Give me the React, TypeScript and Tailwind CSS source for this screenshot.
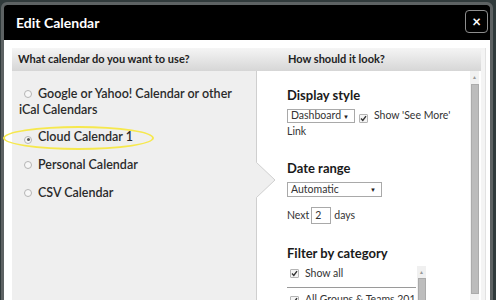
import React from 'react';

const font = { fontFamily: 'Lato, "Open Sans", sans-serif' };

function Radio({ checked }: { checked?: boolean }) {
  return (
    <span className="inline-flex items-center justify-center w-[8px] h-[8px] rounded-full border border-[#b4b4b4] bg-[#f7f7f7] align-[-0px] ml-[5px] mr-[6px]">
      {checked && <span className="w-[3px] h-[3px] rounded-full bg-[#555]" />}
    </span>
  );
}

function Check() {
  return (
    <span className="inline-flex items-center justify-center w-[9px] h-[9px] border border-[#b4b4b4] bg-[#f4f4f4] rounded-[1px] shrink-0">
      <svg width="7" height="7" viewBox="0 0 7 7">
        <path d="M1 3.6 L2.8 5.4 L6 1.2" fill="none" stroke="#333" strokeWidth="1.4" />
      </svg>
    </span>
  );
}

function Select({ label, width }: { label: string; width: string }) {
  return (
    <div className={`${width} h-full border border-[#a9a9a9] bg-white flex items-center justify-between pl-[3px] pr-[5px] text-[10.5px] text-[#333]`}>
      <span>{label}</span>
      <span className="text-[6px] text-[#222]">▼</span>
    </div>
  );
}

export default function App() {
  return (
    <div className="relative w-[496px] h-[300px] overflow-hidden bg-[#303a3b] pt-[2px] pl-[1px]" style={font}>
      <div className="w-[492px] h-[320px] border-[3px] border-[#5d6263] rounded-t-[6px] bg-white overflow-hidden flex flex-col">
        {/* Title bar */}
        <div className="h-[35px] bg-black flex items-center justify-between pl-[12px] pr-[2px] shrink-0">
          <span className="text-white text-[14px] font-bold">Edit Calendar</span>
          <div className="w-[23px] h-[23px] mt-[-2px] border-[1.5px] border-[#8e8e8e] rounded-[4px] flex items-center justify-center text-white text-[15px] font-bold leading-none">
            ×
          </div>
        </div>

        {/* Body */}
        <div className="flex pl-[8px] pt-[8px]">
          <div className="w-[469px] flex flex-col">
            {/* Column headers */}
            <div className="h-[23px] flex items-center bg-gradient-to-b from-[#f5f5f5] to-[#d6d6d6] text-[11px] font-bold text-[#222]">
              <div className="w-[245px] pl-[6px]">What calendar do you want to use?</div>
              <div className="pl-[31px]">How should it look?</div>
            </div>

            <div className="relative flex h-[240px]">
              {/* Source list */}
              <div className="w-[244px] bg-[#efefef] pl-[7px] pr-[10px] pt-[15px] flex flex-col gap-[12px] text-[12.5px] font-semibold leading-[16px] text-[#2a2a2a]">
                <div>
                  <Radio />Google or Yahoo! Calendar or other iCal Calendars
                </div>
                <div className="-mt-[1px]">
                  <Radio checked />Cloud Calendar 1
                </div>
                <div>
                  <Radio />Personal Calendar
                </div>
                <div>
                  <Radio />CSV Calendar
                </div>
              </div>
              <div className="w-px bg-[#cfcfcf]" />

              {/* Arrow notch */}
              <svg className="absolute left-[244px] top-[91px]" width="22" height="38" viewBox="0 0 22 38">
                <polygon points="0,0 19,18 0,36" fill="#efefef" />
                <polyline points="0.5,0.5 19,18 0.5,35.5" fill="none" stroke="#cfcfcf" strokeWidth="1" />
              </svg>

              {/* Look options */}
              <div className="flex-1 flex bg-white">
                <div className="flex-1 pl-[30px] pt-[15px] text-[#333]">
                  <div className="text-[13px] font-bold leading-[18px] text-[#1a1a1a]">Display style</div>
                  <div className="mt-[5px] h-[14px] flex items-center">
                    <Select label="Dashboard" width="w-[68px]" />
                    <span className="ml-[4px]"><Check /></span>
                    <span className="ml-[6px] text-[10.5px]">Show 'See More'</span>
                  </div>
                  <div className="mt-[1px] text-[10.5px] leading-[14px]">Link</div>

                  <div className="mt-[21px] text-[13px] font-bold leading-[18px] text-[#1a1a1a]">Date range</div>
                  <div className="mt-[5px] h-[15px] flex">
                    <Select label="Automatic" width="w-[95px]" />
                  </div>
                  <div className="mt-[10px] flex items-center text-[10.5px]">
                    <span>Next</span>
                    <div className="ml-[2px] w-[20px] h-[17px] border border-[#a9a9a9] pl-[3px] flex items-center">2</div>
                    <span className="ml-[3px]">days</span>
                  </div>

                  <div className="mt-[20px] text-[13px] font-bold leading-[18px] text-[#1a1a1a]">Filter by category</div>
                  <div className="mt-[4px] flex w-[139px] h-[40px]">
                    <div className="w-[130px] text-[10.5px] overflow-hidden">
                      <div className="h-[22px] flex items-center pb-[6px] pl-[3px] border-b border-[#9a9a9a]">
                        <Check />
                        <span className="ml-[6px]">Show all</span>
                      </div>
                      <div className="h-[16px] flex items-center pl-[3px] mt-[4px] whitespace-nowrap">
                        <Check />
                        <span className="ml-[6px]">All Groups &amp; Teams 2015</span>
                      </div>
                    </div>
                    <div className="ml-[1px] w-[9px] bg-[#f0f0f0] flex flex-col items-center pt-[4px]">
                      <span className="text-[5px] leading-none text-[#999]">▲</span>
                      <div className="mt-[3px] w-[8px] flex-1 bg-[#bdbdbd] border border-[#aaa]" />
                    </div>
                  </div>
                </div>

                {/* Panel scrollbar */}
                <div className="w-[9px] mr-[2px] bg-[#f1f1f1] flex flex-col items-center pt-[4px]">
                  <span className="text-[5px] leading-none text-[#999]">▲</span>
                  <div className="mt-[4px] w-[8px] h-[210px] bg-[#bcbcbc] border border-[#ababab]" />
                </div>
              </div>
            </div>
          </div>
          <div className="w-[5px] bg-[#f4f4f4] border-r border-[#e2e2e2]" />
        </div>
      </div>

      {/* Highlight ring */}
      <div className="absolute left-[3px] top-[126px] w-[151px] h-[24px] rounded-[50%] border-2 border-[#f6e84e]" />
    </div>
  );
}
